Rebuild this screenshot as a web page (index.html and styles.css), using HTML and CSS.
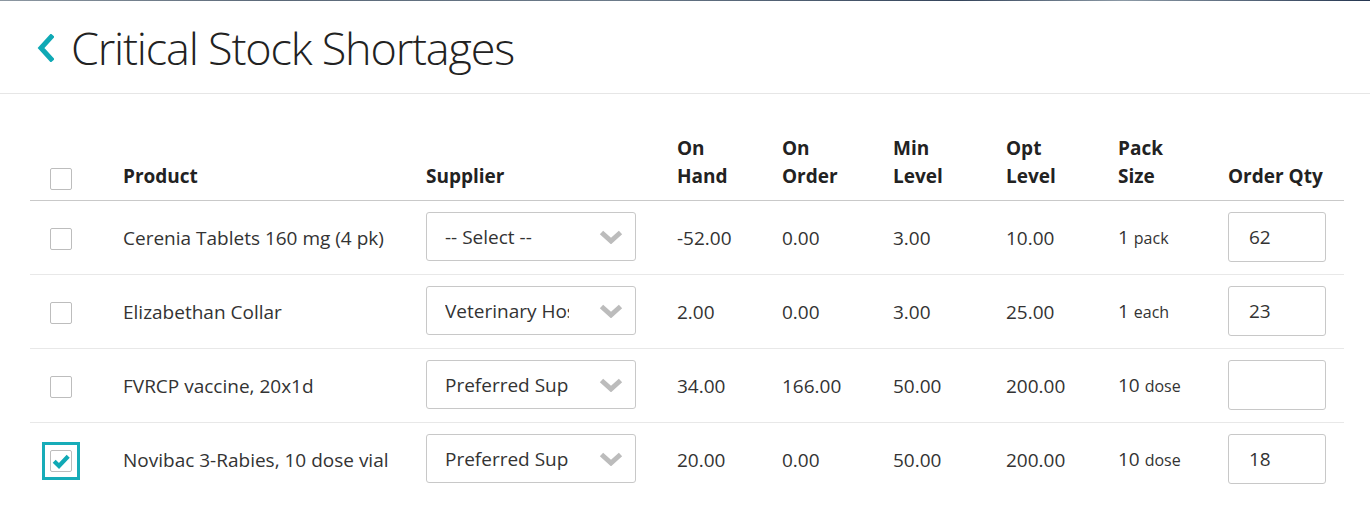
FILE: index.html
```html
<!DOCTYPE html>
<html lang="en">
<head>
<meta charset="utf-8">
<title>Critical Stock Shortages</title>
<link rel="stylesheet" href="styles.css">
</head>
<body>
<div class="topbar"></div>
<header class="page-header">
  <a class="back" href="#" aria-label="Back">
    <svg width="18" height="28" viewBox="0 0 18 28"><path d="M15 3 L5 14 L15 25" fill="none" stroke="#0fa9b5" stroke-width="5" stroke-linecap="square" stroke-linejoin="miter"/></svg>
  </a>
  <h1 class="title">Critical Stock Shortages</h1>
</header>
<main class="content">
  <table class="grid">
    <colgroup>
      <col class="c-check"><col class="c-product"><col class="c-supplier"><col class="c-hand"><col class="c-order"><col class="c-min"><col class="c-opt"><col class="c-pack"><col class="c-qty">
    </colgroup>
    <thead>
      <tr>
        <th><span class="cb"></span></th>
        <th>Product</th>
        <th>Supplier</th>
        <th>On<br>Hand</th>
        <th>On<br>Order</th>
        <th>Min<br>Level</th>
        <th>Opt<br>Level</th>
        <th>Pack<br>Size</th>
        <th>Order Qty</th>
      </tr>
    </thead>
    <tbody>
      <tr>
        <td><span class="cb"></span></td>
        <td>Cerenia Tablets 160 mg (4 pk)</td>
        <td><div class="select"><span class="sel-val">-- Select --</span><svg class="chev" width="24" height="14" viewBox="0 0 24 14"><path d="M2.5 2.5 L12 11 L21.5 2.5" fill="none" stroke="#bcbcbc" stroke-width="5"/></svg></div></td>
        <td>-52.00</td>
        <td>0.00</td>
        <td>3.00</td>
        <td>10.00</td>
        <td>1 <span class="unit">pack</span></td>
        <td><div class="qty">62</div></td>
      </tr>
      <tr>
        <td><span class="cb"></span></td>
        <td>Elizabethan Collar</td>
        <td><div class="select"><span class="sel-val">Veterinary Hospital Supply</span><svg class="chev" width="24" height="14" viewBox="0 0 24 14"><path d="M2.5 2.5 L12 11 L21.5 2.5" fill="none" stroke="#bcbcbc" stroke-width="5"/></svg></div></td>
        <td>2.00</td>
        <td>0.00</td>
        <td>3.00</td>
        <td>25.00</td>
        <td>1 <span class="unit">each</span></td>
        <td><div class="qty">23</div></td>
      </tr>
      <tr>
        <td><span class="cb"></span></td>
        <td>FVRCP vaccine, 20x1d</td>
        <td><div class="select"><span class="sel-val">Preferred Supplier</span><svg class="chev" width="24" height="14" viewBox="0 0 24 14"><path d="M2.5 2.5 L12 11 L21.5 2.5" fill="none" stroke="#bcbcbc" stroke-width="5"/></svg></div></td>
        <td>34.00</td>
        <td>166.00</td>
        <td>50.00</td>
        <td>200.00</td>
        <td>10 <span class="unit">dose</span></td>
        <td><div class="qty"></div></td>
      </tr>
      <tr>
        <td><span class="focus-ring"><span class="cb"><svg width="20" height="20" viewBox="0 0 20 20"><path d="M3.2 10.2 L8 15 L17.2 5.2" fill="none" stroke="#10a9b5" stroke-width="4.2"/></svg></span></span></td>
        <td>Novibac 3-Rabies, 10 dose vial</td>
        <td><div class="select"><span class="sel-val">Preferred Supplier</span><svg class="chev" width="24" height="14" viewBox="0 0 24 14"><path d="M2.5 2.5 L12 11 L21.5 2.5" fill="none" stroke="#bcbcbc" stroke-width="5"/></svg></div></td>
        <td>20.00</td>
        <td>0.00</td>
        <td>50.00</td>
        <td>200.00</td>
        <td>10 <span class="unit">dose</span></td>
        <td><div class="qty">18</div></td>
      </tr>
    </tbody>
  </table>
</main>
</body>
</html>
```

FILE: styles.css
```css
html, body {
  margin: 0;
  padding: 0;
  background: #ffffff;
}
body {
  font-family: "Open Sans", "Liberation Sans", sans-serif;
  color: #333333;
  overflow: hidden;
}
.topbar {
  height: 1px;
  background: linear-gradient(90deg, #8d98a2 0%, #5a6878 20%, #6c7b8a 45%, #34445b 70%, #8c9aa6 82%, #243550 100%);
}
.page-header {
  height: 92px;
  border-bottom: 1px solid #e6e6e6;
  display: flex;
  align-items: center;
  padding-left: 36px;
}
.back {
  display: flex;
  width: 18px;
  height: 28px;
  margin-right: 17px;
  margin-top: 1px;
}
.title {
  margin: 0;
  font-weight: 300;
  font-size: 45px;
  line-height: 1;
  color: #222222;
  letter-spacing: -1.2px;
}
.content {
  padding: 40px 26px 0 30px;
}
.grid {
  border-collapse: collapse;
  table-layout: fixed;
  width: 1314px;
}
.c-check { width: 73px; }
.c-product { width: 303px; }
.c-supplier { width: 251px; }
.c-hand { width: 105px; }
.c-order { width: 111px; }
.c-min { width: 113px; }
.c-opt { width: 112px; }
.c-pack { width: 110px; }
.c-qty { width: 136px; }
.grid th {
  text-align: left;
  vertical-align: bottom;
  font-weight: 700;
  font-size: 19px;
  line-height: 28px;
  color: #222222;
  padding: 0 0 10px 20px;
  border-bottom: 1px solid #c9c9c9;
}
.grid th .cb {
  margin-bottom: 0;
}
.grid td {
  height: 73px;
  padding: 0 0 0 20px;
  font-size: 19px;
  line-height: 24px;
  color: #333333;
  vertical-align: middle;
  white-space: nowrap;
  border-bottom: 1px solid #e8e8e8;
}
.grid tbody tr:last-child td {
  border-bottom: none;
}
.cb {
  display: block;
  width: 20px;
  height: 20px;
  border: 1px solid #bdbdbd;
  border-radius: 2px;
  background: #fff;
  margin-top: 2px;
}
.cb svg {
  display: block;
}
.focus-ring {
  display: block;
  width: 22px;
  height: 22px;
  padding: 5px;
  border: 3px solid #17acb8;
  margin-left: -8px;
  margin-top: 2px;
}
.focus-ring .cb {
  margin-top: 0;
}
.select {
  height: 47px;
  border: 1px solid #c8c8c8;
  border-radius: 3px;
  display: flex;
  align-items: center;
  padding-left: 18px;
  box-sizing: content-box;
  width: 190px;
  margin-top: -2px;
}
.sel-val {
  width: 124px;
  overflow: hidden;
  white-space: nowrap;
  flex: none;
}
.chev {
  margin-left: auto;
  margin-right: 12px;
  flex: none;
}
.unit {
  font-size: 16px;
}
.qty {
  width: 76px;
  height: 48px;
  border: 1px solid #c8c8c8;
  border-radius: 3px;
  padding-left: 20px;
  display: flex;
  align-items: center;
  margin-top: -2px;
}
```
